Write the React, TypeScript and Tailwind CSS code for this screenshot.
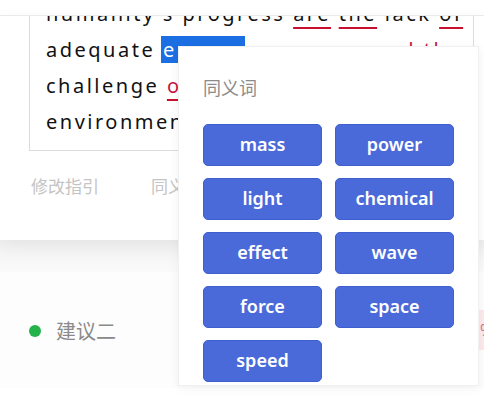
import React from "react";

const SYNONYMS = ["mass", "power", "light", "chemical", "effect", "wave", "force", "space", "speed"];

// Word flagged by the checker: dark text with a red underline
const Flag = ({ children }: { children: React.ReactNode }) => (
  <span className="underline decoration-[#c8102e] decoration-[1.5px] underline-offset-[6px]">{children}</span>
);

const Red = ({ children }: { children: React.ReactNode }) => (
  <span className="text-[#c8143c]">{children}</span>
);

const SynonymPopover = () => (
  <div className="absolute z-20 left-[178px] top-[46px] w-[301px] h-[340px] bg-white border border-[#f0f0f0] shadow-[0_2px_10px_rgba(0,0,0,0.06)] px-[24px]">
    <div className="pt-[27px] h-[77px] text-[18px] leading-[26px] text-[#8c8c8c] font-['Noto_Sans_CJK_SC',sans-serif]">
      同义词
    </div>
    <div className="grid grid-cols-2 gap-x-[13px] gap-y-[12px]">
      {SYNONYMS.map((w) => (
        <button
          key={w}
          type="button"
          className="h-[42px] rounded-[5px] bg-[#4a6ad9] border border-[#3f5fcf] text-white text-[18px] font-semibold font-['Noto_Sans',sans-serif] leading-none pb-[2px]"
        >
          {w}
        </button>
      ))}
    </div>
  </div>
);

export default function App() {
  return (
    <div className="relative w-[484px] h-[404px] overflow-hidden bg-white">
      {/* header strip */}
      <div className="h-[16px] border-b border-[#ececec] bg-white" />

      {/* suggestion card one */}
      <div className="bg-white h-[224px] shadow-[0_6px_18px_rgba(0,0,0,0.06)] relative z-10">
        <div className="ml-[29px] w-[445px] h-[135px] overflow-hidden border-x border-b border-[#dcdcdc]">
          <div className="-mt-[20px] pl-[16px] text-[20px] leading-[36px] tracking-[2.5px] text-[#111] font-['Noto_Sans',sans-serif] whitespace-nowrap">
            <div>
              humanity's progress <Flag>are</Flag> <Flag>the</Flag> lack <Flag>of</Flag>
            </div>
            <div>
              adequate <span className="bg-[#1b6fe3] text-white px-[2px] -mx-[2px]">energy</span> resources{" "}
              <Red>and the</Red>
            </div>
            <div>
              challenge <Red><Flag>of</Flag> the</Red> environment.
            </div>
            <div>environment and the growing</div>
          </div>
        </div>

        <div className="flex gap-[52px] pl-[31px] pt-[22px] text-[17px] text-[#c4c4c4] font-['Noto_Sans_CJK_SC',sans-serif]">
          <span>修改指引</span>
          <span>同义词替换</span>
        </div>
      </div>

      {/* gap between cards */}
      <div className="h-[32px] bg-gradient-to-b from-[#f2f2f2] to-[#fafafa]" />

      {/* suggestion card two */}
      <div className="bg-[#fdfdfd] h-[116px] flex items-start pt-[46px] pl-[29px] relative">
        <span className="w-[12px] h-[12px] rounded-full bg-[#24b34b] mt-[7px]" />
        <span className="ml-[15px] text-[20px] leading-[26px] text-[#8a8a8a] font-['Noto_Sans_CJK_SC',sans-serif]">
          建议二
        </span>
        <span className="absolute right-[-20px] top-[38px] w-[26px] h-[40px] bg-[#fde9ec] text-[#e07080] text-[16px] leading-[40px] pl-[2px]">
          %
        </span>
      </div>

      <SynonymPopover />
    </div>
  );
}
